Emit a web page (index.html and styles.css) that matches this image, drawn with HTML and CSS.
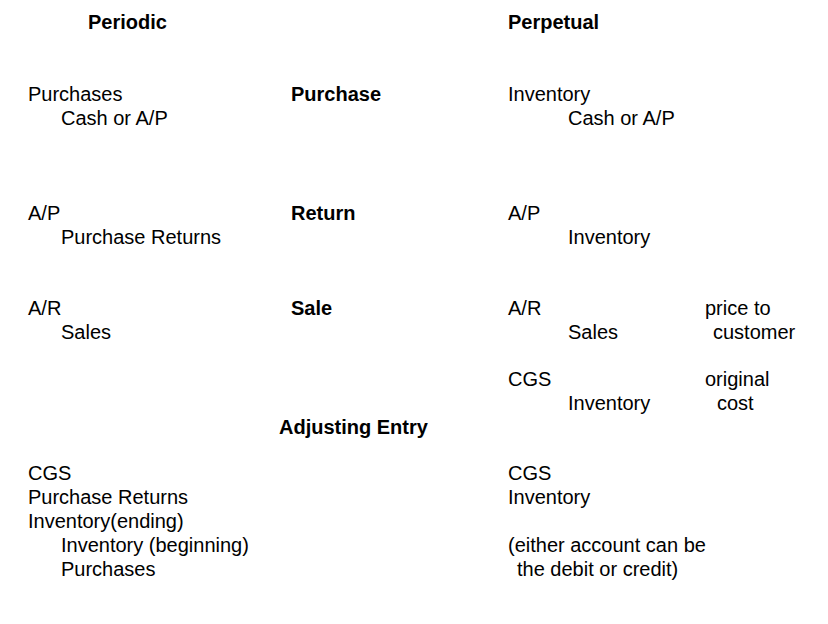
FILE: index.html
```html
<!DOCTYPE html>
<html>
<head>
<meta charset="utf-8">
<link rel="stylesheet" href="styles.css">
</head>
<body>
<div class="row head">
  <div class="cell b periodic">Periodic</div>
  <div class="cell"></div>
  <div class="cell b">Perpetual</div>
  <div class="cell"></div>
</div>

<div class="row purchase">
  <div class="cell"><div>Purchases</div><div class="ind-l">Cash or A/P</div></div>
  <div class="cell b">Purchase</div>
  <div class="cell"><div>Inventory</div><div class="ind-r">Cash or A/P</div></div>
  <div class="cell"></div>
</div>

<div class="row ret">
  <div class="cell"><div>A/P</div><div class="ind-l">Purchase Returns</div></div>
  <div class="cell b">Return</div>
  <div class="cell"><div>A/P</div><div class="ind-r">Inventory</div></div>
  <div class="cell"></div>
</div>

<div class="row sale">
  <div class="cell"><div>A/R</div><div class="ind-l">Sales</div></div>
  <div class="cell b">Sale</div>
  <div class="cell"><div>A/R</div><div class="ind-r">Sales</div><div class="gap"></div><div>CGS</div><div class="ind-r">Inventory</div></div>
  <div class="cell"><div>price to</div><div class="ind-8">customer</div><div class="gap"></div><div>original</div><div class="ind-12">cost</div></div>
</div>

<div class="adjust b">Adjusting Entry</div>

<div class="row adj">
  <div class="cell"><div>CGS</div><div>Purchase Returns</div><div>Inventory(ending)</div><div class="ind-l">Inventory (beginning)</div><div class="ind-l">Purchases</div></div>
  <div class="cell"></div>
  <div class="cell"><div>CGS</div><div>Inventory</div><div class="blank"></div><div class="nowrap">(either account can be</div><div class="ind-9 nowrap">the debit or credit)</div></div>
  <div class="cell"></div>
</div>
</body>
</html>
```

FILE: styles.css
```css
html, body {
  background: #ffffff;
}
body {
  margin: 0;
  padding: 10px 0 0 28px;
  font-family: "Liberation Sans", Arial, sans-serif;
  font-size: 20px;
  line-height: 24px;
  color: #000000;
}
.row {
  display: grid;
  grid-template-columns: 263px 217px 197px 1fr;
}
.b {
  font-weight: bold;
}
.periodic {
  padding-left: 60px;
}
.purchase {
  margin-top: 48px;
}
.ret {
  margin-top: 71px;
}
.sale {
  margin-top: 47px;
}
.adjust {
  margin-top: 0;
  padding-left: 251px;
}
.adj {
  margin-top: 22px;
}
.blank {
  height: 24px;
}
.gap {
  height: 23px;
}
.ind-l {
  padding-left: 33px;
}
.ind-r {
  padding-left: 60px;
}
.ind-8 {
  padding-left: 8px;
}
.ind-9 {
  padding-left: 9px;
}
.ind-12 {
  padding-left: 12px;
}
.nowrap {
  white-space: nowrap;
}
```
